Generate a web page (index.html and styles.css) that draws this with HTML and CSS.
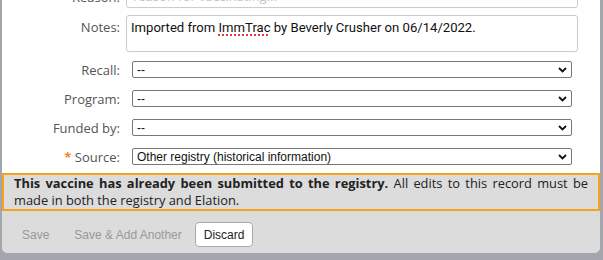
FILE: index.html
```html
<!DOCTYPE html>
<html lang="en">
<head>
    <meta charset="UTF-8">
    <meta name="viewport" content="width=device-width, initial-scale=1.0">
    <title>Edit vaccine</title>
    <link rel="stylesheet" href="styles.css">
</head>
<body>
    <div class="modal">
        <div class="form">
            <div class="row row-reason">
                <label class="label">Reason:</label>
                <div class="input placeholder">reason for vaccinating...</div>
            </div>
            <div class="row row-notes">
                <label class="label">Notes:</label>
                <div class="textarea">Imported from <span class="misspelled">ImmTrac</span> by Beverly Crusher on 06/14/2022.</div>
            </div>
            <div class="row row-select first-select">
                <label class="label">Recall:</label>
                <div class="select"><span>--</span><svg class="chevron" width="9" height="6" viewBox="0 0 9 6"><path d="M1 1 L4.5 4.5 L8 1" fill="none" stroke="#111" stroke-width="1.8"/></svg></div>
            </div>
            <div class="row row-select">
                <label class="label">Program:</label>
                <div class="select"><span>--</span><svg class="chevron" width="9" height="6" viewBox="0 0 9 6"><path d="M1 1 L4.5 4.5 L8 1" fill="none" stroke="#111" stroke-width="1.8"/></svg></div>
            </div>
            <div class="row row-select">
                <label class="label">Funded by:</label>
                <div class="select"><span>--</span><svg class="chevron" width="9" height="6" viewBox="0 0 9 6"><path d="M1 1 L4.5 4.5 L8 1" fill="none" stroke="#111" stroke-width="1.8"/></svg></div>
            </div>
            <div class="row row-select">
                <label class="label"><span class="required">*</span> Source:</label>
                <div class="select"><span>Other registry (historical information)</span><svg class="chevron" width="9" height="6" viewBox="0 0 9 6"><path d="M1 1 L4.5 4.5 L8 1" fill="none" stroke="#111" stroke-width="1.8"/></svg></div>
            </div>
        </div>

        <div class="warning">
            <strong>This vaccine has already been submitted to the registry.</strong> All edits to this record must be made in both the registry and Elation.
        </div>

        <div class="footer">
            <button class="btn btn-link" disabled>Save</button>
            <button class="btn btn-link" disabled>Save &amp; Add Another</button>
            <button class="btn btn-default">Discard</button>
        </div>
    </div>
</body>
</html>
```

FILE: styles.css
```css
body {
    margin: 0;
    height: 260px;
    overflow: hidden;
    background: #a3a6ad;
    font-family: 'Open Sans', sans-serif;
}
.modal {
    margin: 0 3px 0 2px;
    background: white;
    border-radius: 0 0 6px 6px;
    overflow: hidden;
}
.form {
    margin-top: -16px;
    padding-bottom: 2px;
}
.row {
    display: grid;
    grid-template-columns: 118px 1fr;
    column-gap: 6px;
    align-items: center;
}
.label {
    text-align: right;
    font-size: 13px;
    color: #555;
}
.required {
    color: #f0892a;
    font-weight: bold;
}
.row-reason {
    height: 25px;
}
.input {
    height: 23px;
    margin-right: 22px;
    border: 1px solid #ccc;
    border-radius: 3px;
    box-sizing: border-box;
    padding: 0 6px;
    font-size: 13px;
    line-height: 21px;
}
.placeholder {
    color: #c4c4c4;
}
.row-notes {
    margin-top: 6px;
    align-items: start;
}
.row-notes .label {
    padding-top: 3px;
}
.textarea {
    height: 37px;
    margin-right: 22px;
    border: 1px solid #ccc;
    border-radius: 3px;
    box-sizing: border-box;
    padding: 4px 4px 0;
    font-family: Roboto, sans-serif;
    font-size: 13.1px;
    line-height: 16px;
    color: #111;
}
.misspelled {
    text-decoration: underline dotted #e0403a;
    text-decoration-thickness: 2px;
    text-underline-offset: 2px;
}
.row-select {
    height: 29px;
}
.first-select {
    margin-top: 3px;
}
.select {
    display: flex;
    align-items: center;
    justify-content: space-between;
    height: 17px;
    margin: 0 28px 0 6px;
    padding: 0 4px 0 4px;
    border: 1px solid #777;
    border-radius: 2px;
    box-sizing: border-box;
    font-family: 'Liberation Sans', Arial, sans-serif;
    font-size: 12px;
    color: #111;
}
.warning {
    border: 2px solid #f5a31a;
    background: #dcdcdc;
    padding: 0 10px 0 10px;
    font-size: 12.85px;
    line-height: 17px;
    color: #222;
    text-align: justify;
}
.footer {
    display: flex;
    align-items: flex-start;
    gap: 1px;
    height: 42px;
    padding: 11px 8px 0;
    box-sizing: border-box;
    background: #dcdcdc;
}
.btn {
    font-family: 'Liberation Sans', Arial, sans-serif;
    font-size: 12px;
    height: 25px;
    border-radius: 4px;
    cursor: pointer;
}
.btn-link {
    background: none;
    border: none;
    padding: 0 12px;
    color: #999;
}
.btn-default {
    background: white;
    border: 1px solid #a9a9a9;
    padding: 0 8px;
    color: #222;
}
```
